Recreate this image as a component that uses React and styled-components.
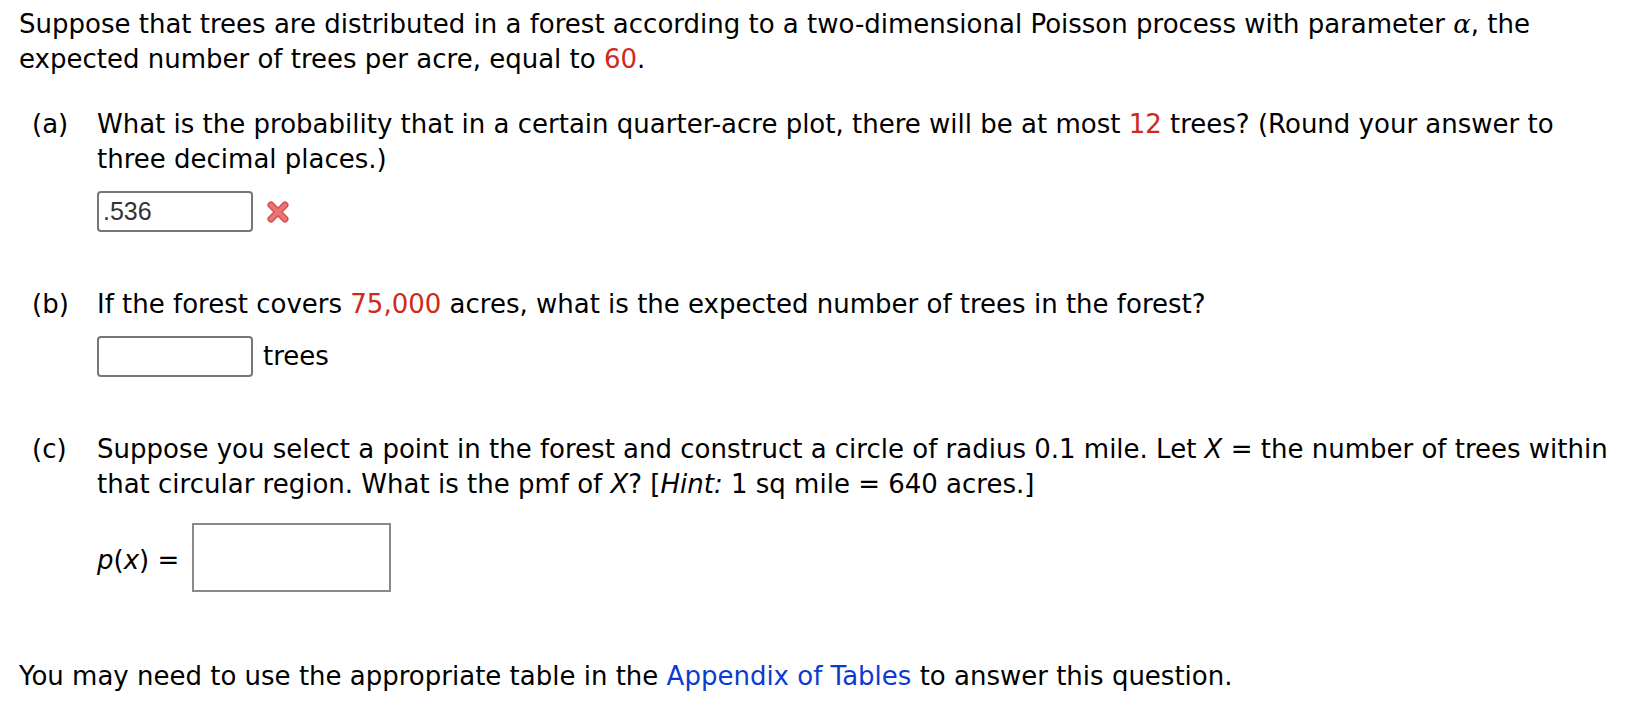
import React from 'react'
import styled, { createGlobalStyle } from 'styled-components';

const GlobalStyle = createGlobalStyle`
    body {
        margin: 0;
        background: #ffffff;
        font-family: "DejaVu Sans", Verdana, sans-serif;
        color: #000000;
    }
`;

function WrongMark () {
    return (
        <Mark viewBox="0 0 26 26">
            <path d="M6 6 L20 20 M20 6 L6 20" stroke="#d94f4f" strokeWidth="7" strokeLinecap="round" />
            <path d="M6 6 L20 20 M20 6 L6 20" stroke="#ec7474" strokeWidth="4" strokeLinecap="round" />
        </Mark>
    )
}

function App () {

    return (
        <Page>
            <GlobalStyle />
            <Intro>
                Suppose that trees are distributed in a forest according to a two-dimensional Poisson process with parameter <Greek>α</Greek>, the<br />
                expected number of trees per acre, equal to <Num>60</Num>.
            </Intro>

            <Part top={30}>
                <Label>(a)</Label>
                <Body>
                    <Text>
                        What is the probability that in a certain quarter-acre plot, there will be at most <Num>12</Num> trees? (Round your answer to<br />
                        three decimal places.)
                    </Text>
                    <AnswerRow gap={12}>
                        <AnswerBox>.536</AnswerBox>
                        <WrongMark />
                    </AnswerRow>
                </Body>
            </Part>

            <Part top={55}>
                <Label>(b)</Label>
                <Body>
                    <Text>
                        If the forest covers <Num>75,000</Num> acres, what is the expected number of trees in the forest?
                    </Text>
                    <AnswerRow gap={10}>
                        <AnswerBox />
                        <Unit>trees</Unit>
                    </AnswerRow>
                </Body>
            </Part>

            <Part top={55}>
                <Label>(c)</Label>
                <Body>
                    <Text>
                        Suppose you select a point in the forest and construct a circle of radius 0.1 mile. Let <i>X</i> = the number of trees within<br />
                        that circular region. What is the pmf of <i>X</i>? [<i>Hint:</i> 1 sq mile = 640 acres.]
                    </Text>
                    <FormulaRow>
                        <Formula><i>p</i>(<i>x</i>) =</Formula>
                        <FormulaBox />
                    </FormulaRow>
                </Body>
            </Part>

            <Footer>
                You may need to use the appropriate table in the <Link href="#">Appendix of Tables</Link> to answer this question.
            </Footer>
        </Page>
    )
}

const Page = styled.div`
    padding: 7px 19px 0 19px;
    font-size: 26px;
    line-height: 35px;
`;

const Intro = styled.p`
    margin: 0;
    white-space: nowrap;
`;

const Greek = styled.i`
    font-family: "DejaVu Serif", serif;
`;

const Num = styled.span`
    color: #d0281a;
`;

const Part = styled.div`
    display: grid;
    grid-template-columns: 65px 1fr;
    margin-top: ${(props) => props.top}px;
    padding-left: 13px;
`;

const Label = styled.div``;

const Body = styled.div`
    display: flex;
    flex-direction: column;
    align-items: flex-start;
`;

const Text = styled.p`
    margin: 0;
    white-space: nowrap;
`;

const AnswerRow = styled.div`
    display: flex;
    align-items: center;
    gap: ${(props) => props.gap}px;
    margin-top: 14px;
`;

const AnswerBox = styled.div`
    box-sizing: border-box;
    width: 156px;
    height: 41px;
    border: 2px solid #777777;
    border-radius: 4px;
    padding: 0 4px;
    font-family: "Liberation Sans", Arial, sans-serif;
    font-size: 25px;
    line-height: 36px;
    color: #333333;
`;

const Mark = styled.svg`
    width: 26px;
    height: 26px;
`;

const Unit = styled.span`
    line-height: 41px;
`;

const FormulaRow = styled.div`
    display: flex;
    align-items: center;
    gap: 13px;
    margin-top: 21px;
`;

const Formula = styled.span`
    white-space: nowrap;
    padding-top: 6px;
`;

const FormulaBox = styled.div`
    box-sizing: border-box;
    width: 199px;
    height: 69px;
    border: 2px solid #8a8a8a;
`;

const Footer = styled.p`
    margin: 67px 0 0 0;
    white-space: nowrap;
`;

const Link = styled.a`
    color: #0b3bd0;
    text-decoration: none;
`;

export default App;
